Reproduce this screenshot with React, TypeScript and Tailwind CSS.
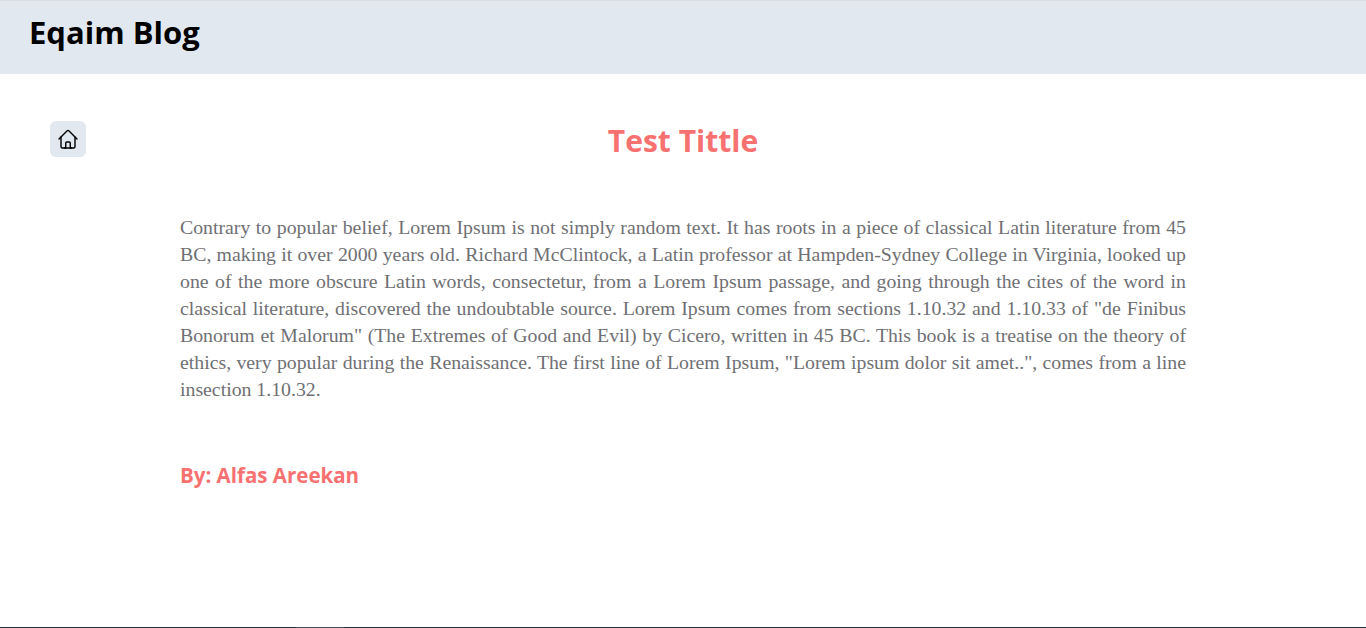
const App = () => {
  return (
    <div className="flex h-[628px] flex-col overflow-hidden bg-white">
      <header className="flex h-[74px] shrink-0 items-center border-t border-[#d9dce1] bg-[#e2e8f0] pb-[11px] pl-[29px]">
        <h1 className="font-['Open_Sans',sans-serif] text-[31px] font-bold text-black">Eqaim Blog</h1>
      </header>
      <main className="relative flex-1 px-[180px] pt-[47px]">
        <button className="absolute left-[50px] top-[47px] flex h-9 w-9 items-center justify-center rounded-md bg-[#e2e8f0]">
          <svg viewBox="0 0 24 24" className="h-6 w-6" fill="none" stroke="black" strokeWidth="1.4" strokeLinecap="round" strokeLinejoin="round">
            <path d="M3 12 11.2 3.8a1.1 1.1 0 0 1 1.6 0L21 12" />
            <path d="M5 10v9.5A1.5 1.5 0 0 0 6.5 21H9.75v-5a1 1 0 0 1 1-1h2.5a1 1 0 0 1 1 1v5h3.25a1.5 1.5 0 0 0 1.5-1.5V10" />
            <path d="M8.5 21h7" />
          </svg>
        </button>
        <h2 className="text-center font-['Open_Sans',sans-serif] text-[30px] leading-[40px] font-bold text-[#f87171]">Test Tittle</h2>
        <p className="mt-[53px] text-justify font-['Liberation_Serif',serif] text-[19.8px] leading-[27px] text-[#6f7074]">
          Contrary to popular belief, Lorem Ipsum is not simply random text. It has roots in a piece of classical Latin literature from 45 BC, making it over 2000 years old. Richard McClintock, a Latin professor at Hampden-Sydney College in Virginia, looked up one of the more obscure Latin words, consectetur, from a Lorem Ipsum passage, and going through the cites of the word in classical literature, discovered the undoubtable source. Lorem Ipsum comes from sections 1.10.32 and 1.10.33 of "de Finibus Bonorum et Malorum" (The Extremes of Good and Evil) by Cicero, written in 45 BC. This book is a treatise on the theory of ethics, very popular during the Renaissance. The first line of Lorem Ipsum, "Lorem ipsum dolor sit amet..", comes from a line insection 1.10.32.
        </p>
        <p className="mt-[58px] font-['Open_Sans',sans-serif] text-[20.5px] leading-[28px] font-bold text-[#f87171]">By: Alfas Areekan</p>
      </main>
      <div className="h-px shrink-0 bg-[#27303a]">
        <div className="ml-[296px] h-px w-[48px] bg-[#4b5158]" />
      </div>
    </div>
  )
}

export default App
